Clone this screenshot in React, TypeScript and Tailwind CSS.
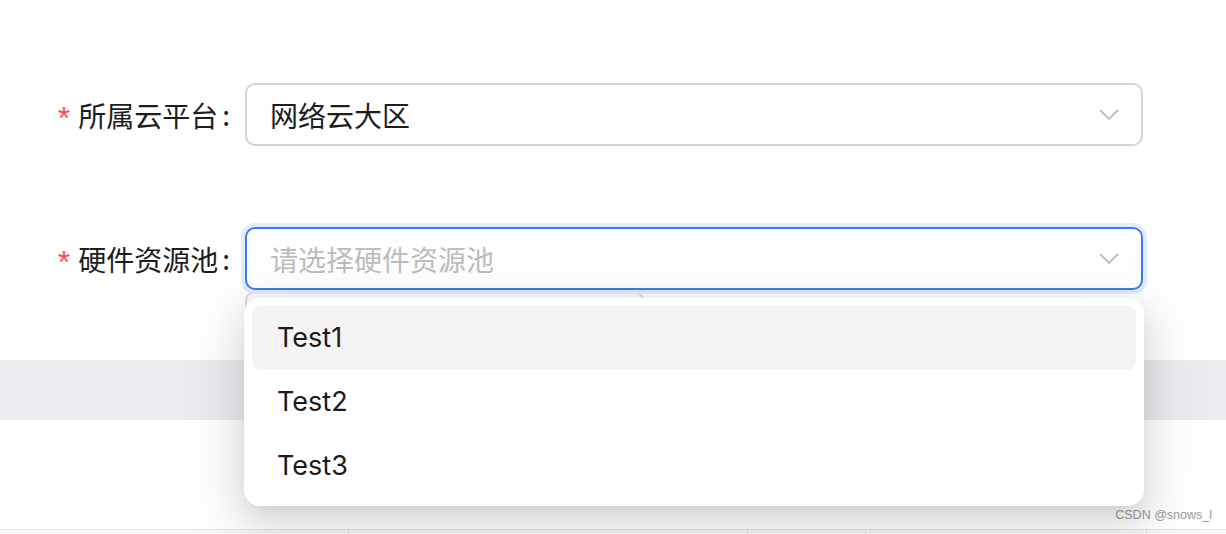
const cjk = { fontFamily: '"Noto Sans CJK SC", "Noto Sans", sans-serif' };
const latin = { fontFamily: 'Inter, "Noto Sans CJK SC", sans-serif' };

function Chevron() {
  return (
    <svg width="20" height="12" viewBox="0 0 20 12" fill="none">
      <polyline points="1,1 10,10 19,1" stroke="#bfbfbf" strokeWidth="1.8" />
    </svg>
  );
}

function Label({ text }: { text: string }) {
  return (
    <div className="w-[245px] shrink-0 flex items-center justify-end pr-[15px] text-[28px] text-[#1d1d1d]" style={cjk}>
      <span className="text-[#ff4d4f] text-[32px] mr-[8px] mt-[6px]" style={{ fontFamily: '"Liberation Sans", sans-serif' }}>*</span>
      <span>{text}</span>
      <span className="ml-[4px] -mt-[2px]">:</span>
    </div>
  );
}

export default function App() {
  const options = ["Test1", "Test2", "Test3"];
  return (
    <div className="relative w-[1226px] h-[534px] bg-white overflow-hidden">
      <div className="pt-[83px]">
        <div className="flex h-[63px]">
          <Label text="所属云平台" />
          <div className="w-[898px] h-[63px] rounded-[10px] border-2 border-[#d4d4d4] flex items-center justify-between pl-[23px] pr-[22px]">
            <span className="text-[28px] text-[#1d1d1d]" style={cjk}>网络云大区</span>
            <Chevron />
          </div>
        </div>

        <div className="flex h-[63px] mt-[81px]">
          <Label text="硬件资源池" />
          <div className="relative w-[898px] h-[63px]">
            <div className="absolute left-0 top-[65px] w-[399px] h-[40px] rounded-[8px] border-2 border-[#dcdcdc] bg-[#fafafa]" />
            <div className="relative h-[63px] rounded-[10px] border-2 border-[#3a7bf6] shadow-[0_0_0_4px_#e3ecfd] bg-white flex items-center justify-between pl-[23px] pr-[22px]">
              <span className="text-[28px] text-[#bdbdbd]" style={cjk}>请选择硬件资源池</span>
              <Chevron />
            </div>
            <div className="absolute z-10 -left-[1px] top-[71px] w-[900px] bg-white rounded-[16px] p-[8px] shadow-[0_12px_32px_0_rgba(0,0,0,0.1),0_6px_12px_-8px_rgba(0,0,0,0.14),0_18px_56px_16px_rgba(0,0,0,0.08)]">
              {options.map((o, i) => (
                <div
                  key={o}
                  className={`h-[64px] rounded-[8px] flex items-center pl-[25px] text-[27px] text-[#1a1a1a] ${i === 0 ? "bg-[#f4f4f4]" : ""}`}
                  style={latin}
                >
                  {o}
                </div>
              ))}
            </div>
          </div>
        </div>

        <div className="mt-[70px] h-[60px] bg-[#ebecf0]" />
        <div className="h-[109px]" />
        <div className="border-t border-[#e2e2e2] h-[5px] bg-[#f7f7f7] flex">
          <div className="w-[349px] border-r border-[#e2e2e2]" />
          <div className="w-[399px] border-r border-[#e2e2e2]" />
          <div className="w-[118px] border-r border-[#e2e2e2]" />
          <div className="w-[281px] border-r border-[#e2e2e2]" />
        </div>
      </div>

      <div
        className="absolute right-[14px] bottom-[9px] text-[12.5px] text-[#9a9a9a] [text-shadow:0_0_2px_#fff]"
        style={{ fontFamily: '"Liberation Sans", sans-serif' }}
      >
        CSDN @snows_l
      </div>
    </div>
  );
}
